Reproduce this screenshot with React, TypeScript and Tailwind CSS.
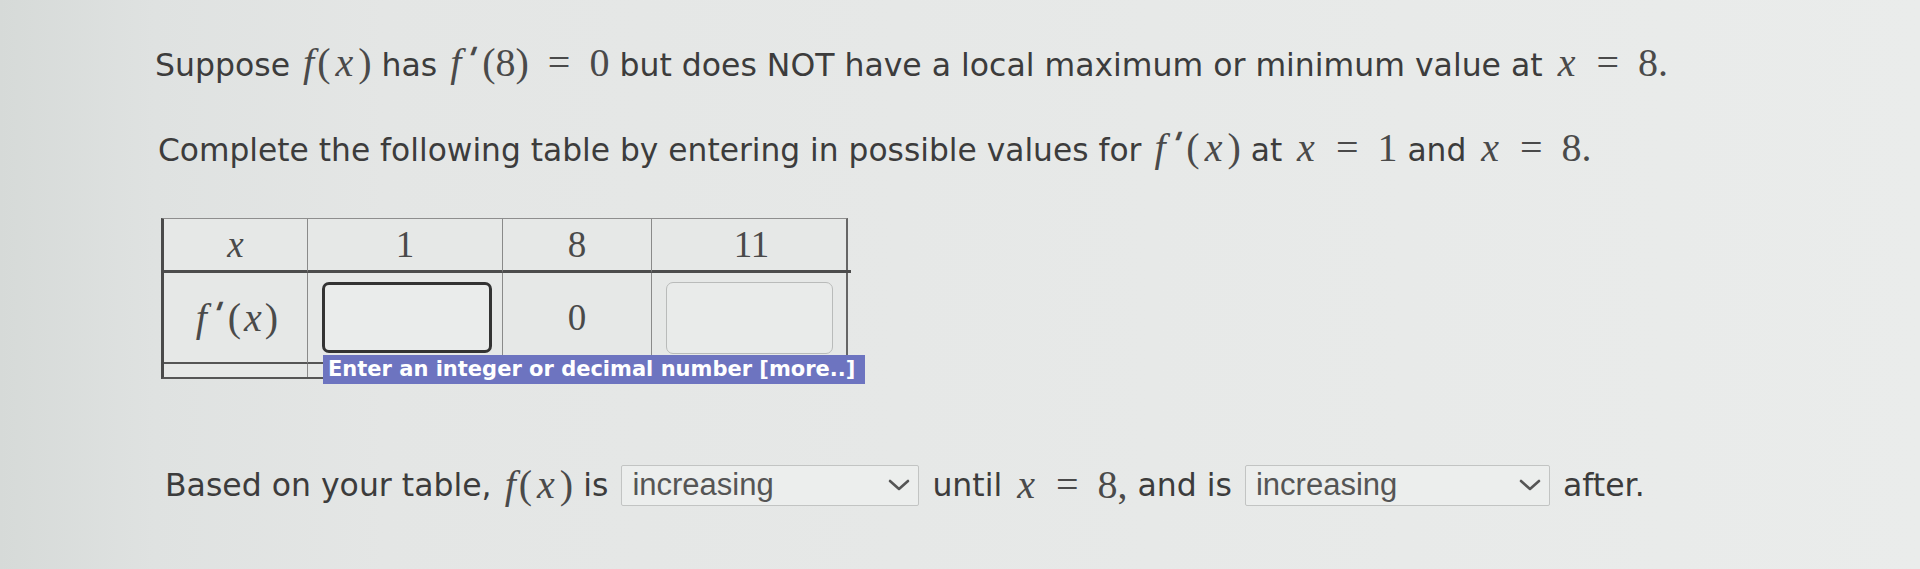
import React from "react";

const M = ({ children }: { children: React.ReactNode }) => (
  <span className="font-['Liberation_Serif','DejaVu_Serif',serif] text-[40px] text-[#4a4a4a] whitespace-nowrap">{children}</span>
);

const F = () => <i className="ml-[3px] mr-[3px]">f</i>;
const X = () => <i className="ml-[5px] mr-[2px]">x</i>;
const Xp = () => <i className="mx-[5px]">x</i>;

const Eq = () => <span className="mx-[19px]">=</span>;

const Prime = () => (
  <span className="inline-block font-['DejaVu_Sans',sans-serif] text-[32px] font-bold -skew-x-[20deg] relative -top-[6px] ml-[2px] mr-[6px]">'</span>
);

const Fx = () => (
  <M>
    <F />(<Xp />)
  </M>
);

const Fpx = () => (
  <M>
    <F />
    <Prime />(<Xp />)
  </M>
);

const Chevron = () => (
  <svg width="22" height="12" viewBox="0 0 22 12" className="shrink-0">
    <path d="M2 2 L11 10 L20 2" fill="none" stroke="#555" strokeWidth="2.6" strokeLinecap="round" strokeLinejoin="round" />
  </svg>
);

const Select = ({ w }: { w: string }) => (
  <span
    className={`inline-flex items-center justify-between align-middle h-[41px] ${w} border border-[#c2c4c3] bg-[#eceeed] rounded-[2px] pl-[10px] pr-[8px] mx-[3px] font-['Liberation_Sans',Arial,sans-serif] text-[31px] text-[#555] leading-none`}
  >
    <span className="relative -top-[1px]">increasing</span>
    <Chevron />
  </span>
);

export default function App() {
  return (
    <div className="w-[1920px] h-[569px] overflow-hidden bg-[linear-gradient(90deg,#d6dad8_0%,#dfe2e1_8%,#e4e6e5_20%,#e7e9e8_60%,#eaeceb_100%)] font-['DejaVu_Sans',Verdana,sans-serif] text-[#3c3c3c]">
      <div className="pl-[155px] pt-[43px]">
        <p className="text-[31.5px] leading-[40px] whitespace-nowrap">
          Suppose <Fx /> has{" "}
          <M>
            <F />
            <Prime />
            (8)
            <Eq />0
          </M>{" "}
          but does NOT have a local maximum or minimum value at{" "}
          <M>
            <X />
            <Eq />8.
          </M>
        </p>

        <p className="mt-[43px] text-[31.3px] leading-[40px] whitespace-nowrap pl-[3px]">
          Complete the following table by entering in possible values for <Fpx /> at{" "}
          <M>
            <X />
            <Eq />1
          </M>{" "}
          and{" "}
          <M>
            <X />
            <Eq />8.
          </M>
        </p>

        <div className="relative mt-[48px] ml-[6px] w-[687px]">
          <div className="grid grid-cols-[144px_195px_149px_199px] grid-rows-[54px_91px_13px] border-l-[3px] border-l-[#4a4a4a] border-t border-t-[#8e8e8e] border-r-2 border-r-[#666] border-b-2 border-b-[#555] bg-[#e6e8e7] font-['Liberation_Serif','DejaVu_Serif',serif] text-[37px] text-[#4a4a4a]">
            <div className="flex items-center justify-center border-r border-r-[#8a8a8a] border-b-[3px] border-b-[#4c4c4c]">
              <i>x</i>
            </div>
            <div className="flex items-center justify-center border-r border-r-[#8a8a8a] border-b-[3px] border-b-[#4c4c4c]">1</div>
            <div className="flex items-center justify-center border-r border-r-[#8a8a8a] border-b-[3px] border-b-[#4c4c4c]">8</div>
            <div className="flex items-center justify-center border-b-[3px] border-b-[#4c4c4c]">11</div>

            <div className="flex items-center justify-center border-r border-r-[#8a8a8a] border-b-2 border-b-[#555]">
              <span className="text-[40px]">
                <F />
                <Prime />(<i className="mx-[3px]">x</i>)
              </span>
            </div>
            <div className="flex items-center border-r border-r-[#8a8a8a] border-b-2 border-b-[#555] pl-[14px]">
              <div className="w-[170px] h-[71px] rounded-[7px] border-[3px] border-[#333] bg-[#eaeceb]" />
            </div>
            <div className="flex items-center justify-center border-r border-r-[#8a8a8a] border-b-2 border-b-[#555]">0</div>
            <div className="flex items-center border-b-2 border-b-[#555] pl-[14px]">
              <div className="w-[167px] h-[72px] rounded-[7px] border border-[#b9bbba] bg-[#e9ebea]" />
            </div>

            <div className="border-r border-r-[#8a8a8a]" />
            <div className="border-r border-r-[#8a8a8a]" />
            <div className="border-r border-r-[#8a8a8a]" />
            <div />
          </div>

          <div className="absolute left-[162px] top-[137px] w-[542px] h-[29px] bg-[#6d74c0] flex items-center pl-[5px] font-['DejaVu_Sans',sans-serif] font-bold text-[21px] text-white whitespace-nowrap leading-none">
            Enter an integer or decimal number [more..]
          </div>
        </div>

        <p className="mt-[84px] pl-[10px] text-[31.5px] leading-[44px] whitespace-nowrap flex items-center">
          <span>Based on your table,&nbsp;</span>
          <Fx />
          <span>&nbsp;is&nbsp;</span>
          <Select w="w-[298px]" />
          <span>&nbsp;until&nbsp;</span>
          <M>
            <X />
            <Eq />8,
          </M>
          <span>&nbsp;and is&nbsp;</span>
          <Select w="w-[305px]" />
          <span>&nbsp;after.</span>
        </p>
      </div>
    </div>
  );
}
